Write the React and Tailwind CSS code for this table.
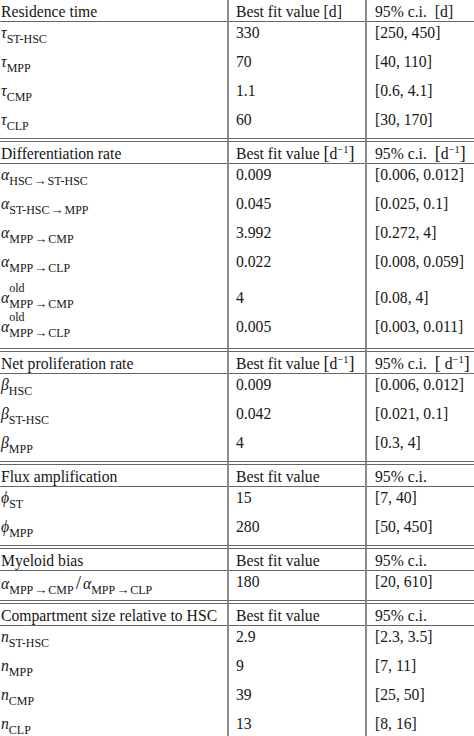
import React from "react";

// helpers for the little bits of math in the first column
const Sub = ({ children }) => (
  <span className="relative top-[5px] text-[12px] leading-none not-italic">{children}</span>
);

const Arr = () => <span className="mx-[1px] text-[13px] leading-none">→</span>;

const Sym = ({ s, sub, sup }) => (
  <span className="whitespace-nowrap">
    <span className="italic">{s}</span>
    {sup ? (
      <span className="relative inline-block">
        <span className="absolute left-0 -top-[7px] text-[12px] leading-none">{sup}</span>
        <Sub>{sub}</Sub>
      </span>
    ) : (
      <Sub>{sub}</Sub>
    )}
  </span>
);

const DInv = ({ space }) => (
  <span className="whitespace-nowrap">
    <span className="text-[18px] leading-none">[</span>
    {space && " "}d
    <span className="relative -top-[6px] text-[10.5px] leading-none">−1</span>
    <span className="text-[18px] leading-none">]</span>
  </span>
);

const sections = [
  {
    head: [
      "Residence time",
      "Best fit value [d]",
      <span>
        95% c.i.<span className="ml-[8px]">[d]</span>
      </span>,
    ],
    rows: [
      [<Sym s="τ" sub="ST-HSC" />, "330", "[250, 450]"],
      [<Sym s="τ" sub="MPP" />, "70", "[40, 110]"],
      [<Sym s="τ" sub="CMP" />, "1.1", "[0.6, 4.1]"],
      [<Sym s="τ" sub="CLP" />, "60", "[30, 170]"],
    ],
  },
  {
    head: [
      "Differentiation rate",
      <span>
        Best fit value <DInv />
      </span>,
      <span>
        95% c.i.<span className="ml-[8px]"><DInv /></span>
      </span>,
    ],
    rows: [
      [<Sym s="α" sub={<>HSC<Arr />ST-HSC</>} />, "0.009", "[0.006, 0.012]"],
      [<Sym s="α" sub={<>ST-HSC<Arr />MPP</>} />, "0.045", "[0.025, 0.1]"],
      [<Sym s="α" sub={<>MPP<Arr />CMP</>} />, "3.992", "[0.272, 4]"],
      [<Sym s="α" sub={<>MPP<Arr />CLP</>} />, "0.022", "[0.008, 0.059]"],
      [<Sym s="α" sup="old" sub={<>MPP<Arr />CMP</>} />, "4", "[0.08, 4]", "tall"],
      [<Sym s="α" sup="old" sub={<>MPP<Arr />CLP</>} />, "0.005", "[0.003, 0.011]", "tall2"],
    ],
  },
  {
    head: [
      "Net proliferation rate",
      <span>
        Best fit value <DInv />
      </span>,
      <span>
        95% c.i.<span className="ml-[8px]"><DInv space /></span>
      </span>,
    ],
    rows: [
      [<Sym s="β" sub="HSC" />, "0.009", "[0.006, 0.012]"],
      [<Sym s="β" sub="ST-HSC" />, "0.042", "[0.021, 0.1]"],
      [<Sym s="β" sub="MPP" />, "4", "[0.3, 4]"],
    ],
  },
  {
    head: ["Flux amplification", "Best fit value", "95% c.i."],
    rows: [
      [<Sym s="ϕ" sub="ST" />, "15", "[7, 40]"],
      [<Sym s="ϕ" sub="MPP" />, "280", "[50, 450]"],
    ],
  },
  {
    head: ["Myeloid bias", "Best fit value", "95% c.i."],
    rows: [
      [
        <span className="whitespace-nowrap">
          <Sym s="α" sub={<>MPP<Arr />CMP</>} />
          <span className="mx-[2px] text-[19px] leading-none">/</span>
          <Sym s="α" sub={<>MPP<Arr />CLP</>} />
        </span>,
        "180",
        "[20, 610]",
      ],
    ],
  },
  {
    head: ["Compartment size relative to HSC", "Best fit value", "95% c.i."],
    rows: [
      [<Sym s="n" sub="ST-HSC" />, "2.9", "[2.3, 3.5]"],
      [<Sym s="n" sub="MPP" />, "9", "[7, 11]"],
      [<Sym s="n" sub="CMP" />, "39", "[25, 50]"],
      [<Sym s="n" sub="CLP" />, "13", "[8, 16]"],
    ],
    last: true,
  },
];

const rowH = {
  tall: "h-[35px] pt-[9px]",
  tall2: "h-[33px] pt-[3px]",
};

const vline = "border-r-2 border-[#8c8c8c]";

export default function App() {
  return (
    <div
      className="w-[474px] overflow-hidden bg-white text-[15.7px] text-[#161616]"
      style={{ fontFamily: '"Liberation Serif", "DejaVu Serif", serif' }}
    >
      {sections.map((sec, i) => (
        <div key={i}>
          {/* header */}
          <div className="grid h-[22px] grid-cols-[229px_138px_1fr] border-b border-[#666]">
            <div className={`${vline} flex items-center pl-[1px] whitespace-nowrap`}>{sec.head[0]}</div>
            <div className={`${vline} flex items-center pl-[7px] whitespace-nowrap`}>{sec.head[1]}</div>
            <div className="flex items-center pl-[8px] whitespace-nowrap">{sec.head[2]}</div>
          </div>

          {/* rows */}
          {sec.rows.map((r, j) => {
            const hc = rowH[r[3]] || "h-[29px] pt-[2px]";
            return (
              <div key={j} className="grid grid-cols-[229px_138px_1fr] leading-[18px]">
                <div className={`${vline} ${hc} pl-[1px] whitespace-nowrap`}>{r[0]}</div>
                <div className={`${vline} ${hc} pl-[7px]`}>{r[1]}</div>
                <div className={`${hc} pl-[8px] whitespace-nowrap`}>{r[2]}</div>
              </div>
            );
          })}

          {/* double rule between blocks */}
          {!sec.last && (
            <div className="grid grid-cols-[229px_138px_1fr]">
              <div className={`${vline} h-[4px] border-y border-y-[#666]`}></div>
              <div className={`${vline} h-[4px] border-y border-y-[#666]`}></div>
              <div className="h-[4px] border-y border-y-[#666]"></div>
            </div>
          )}
        </div>
      ))}
    </div>
  );
}
